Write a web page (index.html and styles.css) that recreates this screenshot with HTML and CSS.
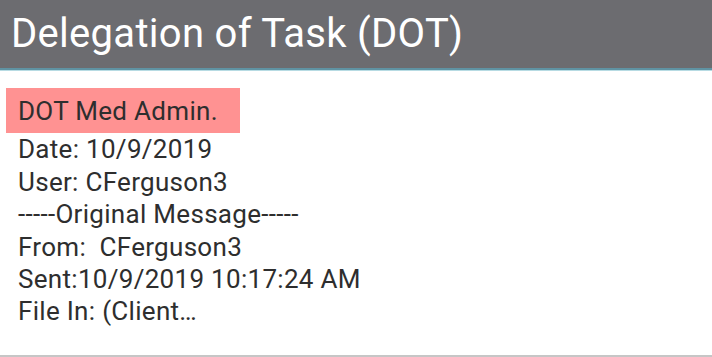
FILE: index.html
```html
<!DOCTYPE html>
<html>
<head>
<meta charset="utf-8">
<link rel="stylesheet" href="styles.css">
</head>
<body>
<div class="screen">
  <header class="bar">
    <h1 class="title">Delegation of Task (DOT)</h1>
  </header>
  <main class="message">
    <div class="line highlight">DOT Med Admin.</div>
    <div class="line">Date: 10/9/2019</div>
    <div class="line">User: CFerguson3</div>
    <div class="line">-----Original Message-----</div>
    <div class="line">From:&nbsp; CFerguson3</div>
    <div class="line">Sent:10/9/2019 10:17:24 AM</div>
    <div class="line">File In: (Client…</div>
  </main>
</div>
</body>
</html>
```

FILE: styles.css
```css
html, body {
  margin: 0;
  padding: 0;
  background: #ffffff;
}
.screen {
  width: 712px;
  height: 357px;
  display: flex;
  flex-direction: column;
  font-family: Roboto, "Liberation Sans", sans-serif;
  box-sizing: border-box;
  border-bottom: 2px solid #c6c6c6;
}
.bar {
  height: 68px;
  background: #6c6c70;
  border-bottom: 2px solid #5f93a3;
  box-shadow: 0 1px 0 #b7dbe3;
  display: flex;
  align-items: flex-start;
  padding-left: 11px;
}
.title {
  margin: 0;
  font-weight: 400;
  font-size: 40px;
  letter-spacing: 0.3px;
  line-height: 40px;
  padding-top: 14px;
  color: #ffffff;
}
.message {
  display: flex;
  flex-direction: column;
  align-items: flex-start;
  padding-top: 18px;
}
.line {
  font-size: 26px;
  letter-spacing: 0.3px;
  line-height: 32.4px;
  color: #2e2e2e;
  padding-left: 18px;
  white-space: pre;
}
.highlight {
  background: #ff9292;
  margin-left: 6px;
  padding-left: 12px;
  width: 222px;
  padding-top: 7px;
  padding-bottom: 6px;
  box-sizing: content-box;
}
```
